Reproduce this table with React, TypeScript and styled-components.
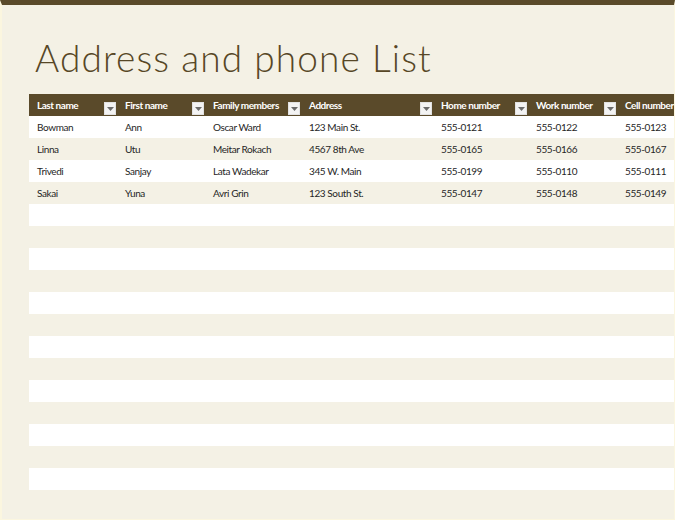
import React from 'react';
import styled, { createGlobalStyle } from 'styled-components';

const GlobalStyle = createGlobalStyle`
  html, body {
    margin: 0;
    padding: 0;
    overflow: hidden;
  }
  body {
    font-family: Lato, "Open Sans", sans-serif;
  }
`;

const COLUMNS = '88px 88px 96px 132px 95px 89px 110px';

interface IContact {
  last: string;
  first: string;
  family: string;
  address: string;
  home: string;
  work: string;
  cell: string;
}

const headers = [
  'Last name',
  'First name',
  'Family members',
  'Address',
  'Home number',
  'Work number',
  'Cell number',
];

const contacts: IContact[] = [
  { last: 'Bowman', first: 'Ann', family: 'Oscar Ward', address: '123 Main St.', home: '555-0121', work: '555-0122', cell: '555-0123' },
  { last: 'Linna', first: 'Utu', family: 'Meitar Rokach', address: '4567 8th Ave', home: '555-0165', work: '555-0166', cell: '555-0167' },
  { last: 'Trivedi', first: 'Sanjay', family: 'Lata Wadekar', address: '345 W. Main', home: '555-0199', work: '555-0110', cell: '555-0111' },
  { last: 'Sakai', first: 'Yuna', family: 'Avri Grin', address: '123 South St.', home: '555-0147', work: '555-0148', cell: '555-0149' },
];

// blank striped rows under the data, as in the spreadsheet template
const EMPTY_ROWS = 14;

const Page = styled.div`
  width: 675px;
  height: 520px;
  box-sizing: border-box;
  background: #f4f1e5;
  border-top: 5px solid #5a4a2a;
  border-left: 2px solid #fbf6df;
  border-right: 1px solid #fbf6df;
  border-bottom: 1px solid #fbf6df;
  overflow: hidden;
`;

const Title = styled.h1`
  margin: 0;
  padding: 31px 0 0 33px;
  height: 58px;
  font-family: Lato, sans-serif;
  font-weight: 300;
  font-size: 37px;
  line-height: 44px;
  letter-spacing: 1.1px;
  color: #574726;
  white-space: nowrap;
`;

const Table = styled.div`
  margin-left: 27px;
  width: 720px;
`;

const Row = styled.div<{ $alt?: boolean }>`
  display: grid;
  grid-template-columns: ${COLUMNS};
  height: 22px;
  background: ${(p) => (p.$alt ? '#f4f1e5' : '#ffffff')};
`;

const HeaderRow = styled(Row)`
  background: #5a4a2a;
`;

const HeaderCell = styled.div`
  display: flex;
  align-items: center;
  padding-left: 8px;
  padding-right: 1px;
  font-size: 10px;
  font-weight: 700;
  letter-spacing: -0.45px;
  color: #ffffff;
  white-space: nowrap;
  overflow: hidden;
`;

const HeaderLabel = styled.span`
  flex: 1;
`;

const FilterButton = styled.span`
  align-self: flex-end;
  margin-bottom: 1px;
  width: 12px;
  height: 13px;
  flex-shrink: 0;
  box-sizing: border-box;
  background: #f3f3f3;
  border: 1px solid #e2e2e2;
  display: flex;
  align-items: center;
  justify-content: center;
`;

const Cell = styled.div`
  display: flex;
  align-items: center;
  padding-left: 8px;
  font-size: 10px;
  letter-spacing: -0.4px;
  color: #262626;
  white-space: nowrap;
  overflow: hidden;
`;

const Arrow = () => (
  <svg width="7" height="4" viewBox="0 0 7 4">
    <path d="M0 0 H7 L3.5 4 Z" fill="#6b6b6b" />
  </svg>
);

export default function App() {
  return (
    <>
      <GlobalStyle />
      <Page>
        <Title>Address and phone List</Title>
        <Table>
          <HeaderRow>
            {headers.map((h) => (
              <HeaderCell key={h}>
                <HeaderLabel>{h}</HeaderLabel>
                <FilterButton>
                  <Arrow />
                </FilterButton>
              </HeaderCell>
            ))}
          </HeaderRow>
          {contacts.map((c, i) => (
            <Row key={c.last} $alt={i % 2 === 1}>
              <Cell>{c.last}</Cell>
              <Cell>{c.first}</Cell>
              <Cell>{c.family}</Cell>
              <Cell>{c.address}</Cell>
              <Cell>{c.home}</Cell>
              <Cell>{c.work}</Cell>
              <Cell>{c.cell}</Cell>
            </Row>
          ))}
          {Array.from({ length: EMPTY_ROWS }).map((_, i) => (
            <Row key={'empty' + i} $alt={(contacts.length + i) % 2 === 1} />
          ))}
        </Table>
      </Page>
    </>
  );
}
